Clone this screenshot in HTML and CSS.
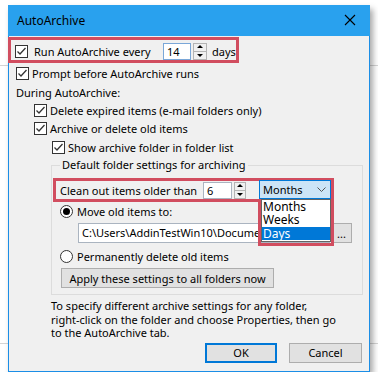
FILE: index.html
```html
<!DOCTYPE html>
<html lang="en">
<head>
    <meta charset="UTF-8">
    <meta name="viewport" content="width=device-width, initial-scale=1.0">
    <title>AutoArchive</title>
    <link rel="stylesheet" href="styles.css">
</head>
<body>

<div class="window">
    <div class="titlebar">
        <span class="title">AutoArchive</span>
        <svg class="close" width="12" height="12" viewBox="0 0 12 12">
            <path d="M1 1 L11 11 M11 1 L1 11" stroke="#000" stroke-width="1.1" fill="none"/>
        </svg>
    </div>

    <div class="client">
        <!-- Run every N days (highlighted) -->
        <div class="mark mark-run">
            <span class="check"><svg width="13" height="13" viewBox="0 0 13 13"><rect x="0.5" y="0.5" width="12" height="12" fill="#fff" stroke="#333"/><path d="M2.5 6.5 L5 9 L10.5 3" stroke="#333" stroke-width="1.3" fill="none"/></svg></span>
            <span class="run-label">Run AutoArchive every</span>
            <span class="field field-days">14</span>
            <span class="spinner"><span class="spin-up"></span><span class="spin-down"></span></span>
            <span class="unit">days</span>
        </div>

        <div class="row row-19 lvl0">
            <span class="check"><svg width="13" height="13" viewBox="0 0 13 13"><rect x="0.5" y="0.5" width="12" height="12" fill="#fff" stroke="#333"/><path d="M2.5 6.5 L5 9 L10.5 3" stroke="#333" stroke-width="1.3" fill="none"/></svg></span>
            Prompt before AutoArchive runs
        </div>
        <div class="row row-18 lvl0">During AutoArchive:</div>
        <div class="row row-18 lvl1">
            <span class="check"><svg width="13" height="13" viewBox="0 0 13 13"><rect x="0.5" y="0.5" width="12" height="12" fill="#fff" stroke="#333"/><path d="M2.5 6.5 L5 9 L10.5 3" stroke="#333" stroke-width="1.3" fill="none"/></svg></span>
            Delete expired items (e-mail folders only)
        </div>
        <div class="row row-19 lvl1">
            <span class="check"><svg width="13" height="13" viewBox="0 0 13 13"><rect x="0.5" y="0.5" width="12" height="12" fill="#fff" stroke="#333"/><path d="M2.5 6.5 L5 9 L10.5 3" stroke="#333" stroke-width="1.3" fill="none"/></svg></span>
            Archive or delete old items
        </div>
        <div class="row row-19 lvl2">
            <span class="check"><svg width="13" height="13" viewBox="0 0 13 13"><rect x="0.5" y="0.5" width="12" height="12" fill="#fff" stroke="#333"/><path d="M2.5 6.5 L5 9 L10.5 3" stroke="#333" stroke-width="1.3" fill="none"/></svg></span>
            Show archive folder in folder list
        </div>

        <!-- Group box -->
        <div class="group">
            <span class="legend">Default folder settings for archiving</span>

            <div class="mark mark-clean">
                <span class="clean-label">Clean out items older than</span>
                <span class="field field-age">6</span>
                <span class="spinner small"><span class="spin-up"></span><span class="spin-down"></span></span>
                <div class="combo">
                    <span>Months</span>
                    <svg class="chevron" width="9" height="6" viewBox="0 0 9 6"><path d="M0.5 0.5 L4.5 4.5 L8.5 0.5" stroke="#555" stroke-width="1" fill="none"/></svg>
                    <div class="drop-mark">
                        <ul class="drop-list">
                            <li>Months</li>
                            <li>Weeks</li>
                            <li class="selected">Days</li>
                        </ul>
                    </div>
                </div>
            </div>

            <div class="row row-18 glvl">
                <span class="radio on"></span>
                Move old items to:
            </div>
            <div class="path-row">
                <span class="path">C:\Users\AddinTestWin10\Docume</span>
                <span class="btn btn-browse">...</span>
            </div>
            <div class="row row-18 glvl perm">
                <span class="radio"></span>
                Permanently delete old items
            </div>
            <span class="btn btn-apply">Apply these settings to all folders now</span>
        </div>

        <p class="note">To specify different archive settings for any folder,<br>right-click on the folder and choose Properties, then go<br>to the AutoArchive tab.</p>

        <div class="actions">
            <span class="btn btn-ok">OK</span>
            <span class="btn btn-cancel">Cancel</span>
        </div>
    </div>
</div>

</body>
</html>
```

FILE: styles.css
```css
body {
    margin: 0;
    font-family: "Noto Sans", sans-serif;
    font-size: 11px;
    color: #000;
    background:
        linear-gradient(#d4d4d4, #d4d4d4) 0 65px / 100% 1px no-repeat,
        linear-gradient(#d4d4d4, #d4d4d4) 0 343px / 100% 1px no-repeat,
        #fff;
}
.window {
    margin: 5px 0 0 8px;
    width: 362px;
    box-sizing: border-box;
    border: 1px solid #1b8ee6;
    border-top: 0;
    box-shadow: 3px 4px 6px rgba(0,0,0,0.35);
}
.titlebar {
    height: 31px;
    margin: 0 -1px;
    background-color: #29a1ee;
    display: flex;
    align-items: center;
    justify-content: space-between;
    padding: 0 14px 0 9px;
}
.title {
    font-size: 12px;
}
.close {
    margin-top: -1px;
}
.client {
    background-color: #f0f0f0;
    height: 335px;
    padding-top: 1px;
    box-sizing: border-box;
}

/* red highlight boxes */
.mark {
    box-sizing: border-box;
    border: 3px solid #d14d5f;
    display: flex;
    align-items: center;
}
.mark-run {
    width: 231px;
    height: 26px;
    margin-left: -1px;
    padding: 2px 0 0 4px;
}
.run-label {
    width: 129px;
    margin-left: 3px;
}

.row {
    display: flex;
    align-items: center;
}
.row-18 { height: 18px; }
.row-19 { height: 19px; }
.lvl0 { padding-left: 7px; }
.lvl1 { padding-left: 25px; }
.lvl2 { padding-left: 43px; }
.mark-run + .row { margin-top: 1px; }
.check {
    display: inline-flex;
    margin-right: 3px;
}

/* text fields and spinners */
.field {
    box-sizing: border-box;
    height: 17px;
    background: #fff;
    border: 1px solid #7aa7d8;
    padding-left: 3px;
    line-height: 15px;
}
.field-days {
    width: 28px;
}
.field-age {
    width: 29px;
    border-color: #aab4c0;
}
.spinner {
    display: inline-flex;
    flex-direction: column;
    box-sizing: border-box;
    width: 14px;
    height: 17px;
    margin-left: 2px;
    border: 1px solid #b4b4b4;
    background: #f0f0f0;
}
.spinner.small {
    width: 12px;
}
.spin-up, .spin-down {
    flex: 1;
    position: relative;
}
.spin-up {
    border-bottom: 1px solid #b4b4b4;
}
.spin-up::after, .spin-down::after {
    content: "";
    position: absolute;
    left: 50%;
    top: 50%;
    margin: -2px 0 0 -3px;
    border-left: 3px solid transparent;
    border-right: 3px solid transparent;
}
.spin-up::after {
    border-bottom: 3px solid #000;
}
.spin-down::after {
    border-top: 3px solid #000;
    margin-top: -1px;
}
.unit {
    margin-left: 5px;
}

/* group box */
.group {
    margin: 8px 0 0 42px;
    width: 312px;
    box-sizing: border-box;
    border: 1px solid #dcdcdc;
    padding: 0 0 6px 0;
}
.legend {
    display: block;
    width: max-content;
    margin: -8px 0 0 8px;
    padding: 0 2px;
    height: 14px;
    line-height: 14px;
    background: #f0f0f0;
}
.mark-clean {
    margin: 6px 0 0 1px;
    width: 281px;
    height: 24px;
    padding-left: 4px;
}
.clean-label {
    width: 143px;
}
.mark-clean .spinner {
    margin-right: 13px;
}
.combo {
    position: relative;
    box-sizing: border-box;
    width: 72px;
    height: 19px;
    margin-top: -2px;
    border: 1px solid #0078d7;
    background: #cce4f7;
    display: flex;
    align-items: center;
    justify-content: space-between;
    padding: 0 4px 0 3px;
}
.chevron {
    margin-top: 1px;
}
.drop-mark {
    position: absolute;
    top: 18px;
    left: -2px;
    width: 76px;
    height: 47px;
    box-sizing: border-box;
    border: 3px solid #d14d5f;
    border-top: 0;
}
.drop-list {
    list-style: none;
    margin: 0;
    padding: 0;
    box-sizing: border-box;
    height: 43px;
    background: #fff;
    border: 1px solid #646464;
}
.drop-list li {
    height: 13.5px;
    line-height: 13px;
    padding-left: 1px;
    font-size: 12px;
}
.drop-list .selected {
    background: #0078d7;
    color: #fff;
}
.glvl {
    padding-left: 8px;
}
.radio {
    box-sizing: border-box;
    width: 13px;
    height: 13px;
    border: 1px solid #333;
    border-radius: 50%;
    background: #fff;
    margin-right: 4px;
    display: inline-flex;
    align-items: center;
    justify-content: center;
}
.radio.on::after {
    content: "";
    width: 7px;
    height: 7px;
    border-radius: 50%;
    background: #000;
}
.path-row {
    display: flex;
    margin: 3px 0 0 26px;
    height: 20px;
}
.path {
    box-sizing: border-box;
    width: 252px;
    height: 20px;
    border: 1px solid #aab4c0;
    background: #fff;
    padding-left: 3px;
    line-height: 18px;
    white-space: nowrap;
    overflow: hidden;
}
.btn {
    box-sizing: border-box;
    display: inline-flex;
    align-items: center;
    justify-content: center;
    height: 20px;
    background: #e1e1e1;
    border: 1px solid #adadad;
}
.btn-browse {
    width: 21px;
    margin-left: 1px;
}
.perm {
    margin-top: 4px;
}
.btn-apply {
    margin: 3px 0 0 9px;
    width: 213px;
}
.note {
    margin: 4px 0 0 42px;
    line-height: 13.5px;
}
.actions {
    display: flex;
    justify-content: flex-end;
    gap: 12px;
    margin: 3px 7px 0 0;
}
.btn-ok {
    width: 72px;
    border: 2px solid #0078d7;
}
.btn-cancel {
    width: 73px;
}
```
